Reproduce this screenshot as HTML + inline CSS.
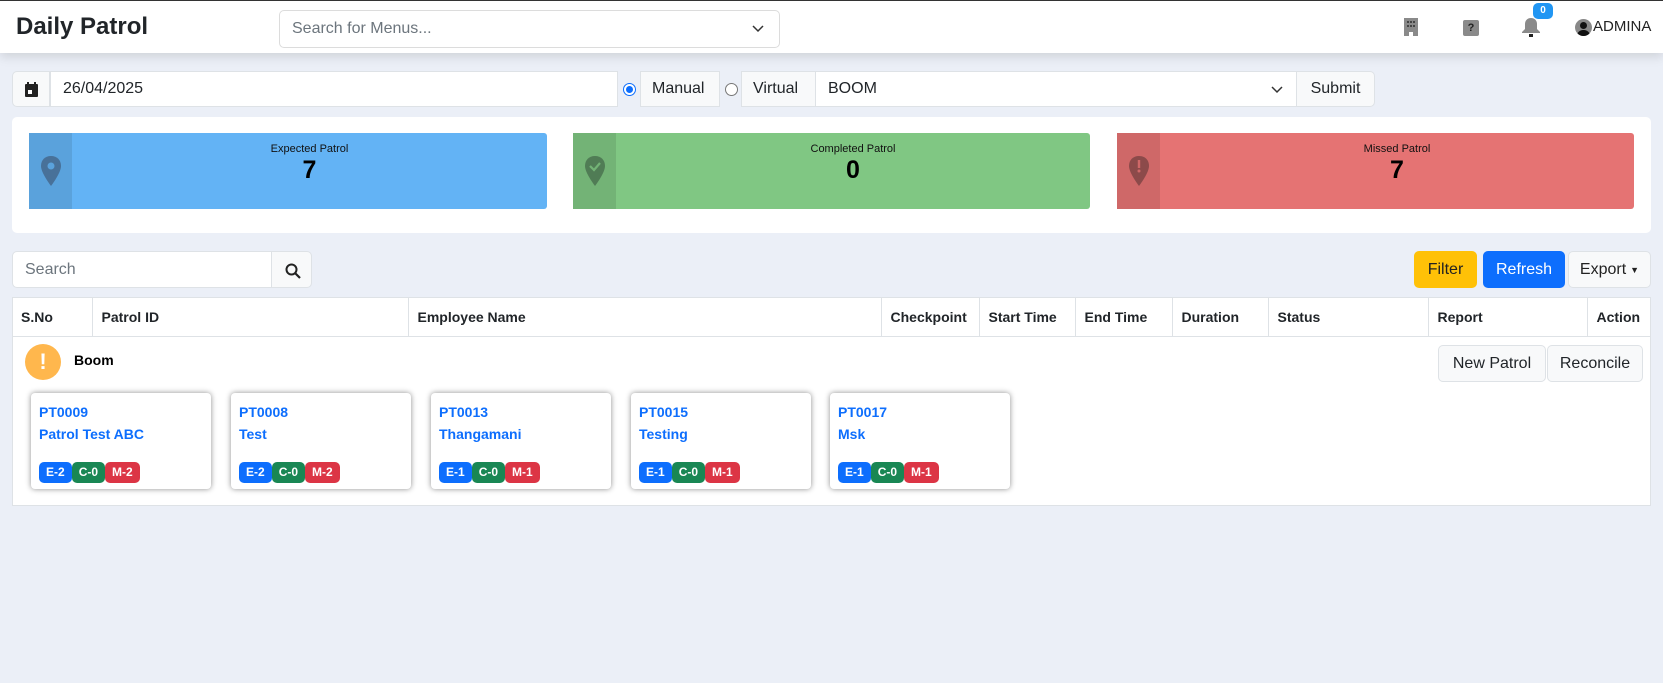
<!DOCTYPE html>
<html><head><meta charset="utf-8"><style>
*{box-sizing:border-box;margin:0;padding:0}
body{width:1663px;height:683px;background:#ebeff7;font-family:"Liberation Sans",sans-serif;position:relative;overflow:hidden;color:#212529}
.a{position:absolute}
.hdr{left:0;top:0;width:1663px;height:53px;background:#fff;border-top:1px solid #333;box-shadow:0 4px 10px rgba(0,0,0,.12)}
.box{border:1px solid #dee2e6;background:#fff}
.gb{background:#f8f9fa;border:1px solid #dee2e6}
.t16{font-size:16px}
.stat{top:133px;height:76px;border-radius:3px}
.strip{left:0;top:0;width:43px;height:100%;display:flex;align-items:center;justify-content:center}
.st{position:absolute;left:43px;right:0;text-align:center;top:10px;font-size:11px;color:#111}
.sn{position:absolute;left:43px;right:0;text-align:center;top:23px;font-size:25px;font-weight:bold;color:#000}
th{font-size:14px;font-weight:bold;text-align:left}
.card{top:393px;width:180px;height:96px;background:#fff;border-radius:4px;box-shadow:0 0 6px rgba(0,0,0,.45)}
.pid{position:absolute;left:8px;top:8px;font-size:14px;font-weight:bold;color:#0d6efd;line-height:22px}
.bd{position:absolute;left:8px;top:69px;display:flex}
.bd span{color:#fff;font-size:12px;font-weight:bold;padding:0 7px;height:21px;line-height:21px;border-radius:5px}
.e{background:#0d6efd}.c{background:#198754}.m{background:#dc3545}
.btn{border-radius:5px;font-size:16px;display:flex;align-items:center;justify-content:center}
</style></head><body>
<div class="a hdr">
<div class="a" style="left:16px;top:12px;font-size:24px;font-weight:bold;color:#212529">Daily Patrol</div>
<div class="a box" style="left:279px;top:9px;width:501px;height:38px;border-radius:5px;border-color:#dcdcdc">
<span class="a" style="left:12px;top:9px;font-size:16px;color:#6c757d">Search for Menus...</span>
<svg class="a" style="left:472px;top:14px" width="12" height="8" viewBox="0 0 12 8"><path d="M1 1l5 5 5-5" fill="none" stroke="#333" stroke-width="1.5"/></svg></div>
<svg class="a" style="left:1404px;top:17px" width="14" height="18" viewBox="0 0 14 18"><path d="M0 0h14v18h-5v-4h-4v4h-5z" fill="#8a8a8a"/><g fill="#444"><rect x="3" y="3" width="2" height="2"/><rect x="6" y="3" width="2" height="2"/><rect x="9" y="3" width="2" height="2"/><rect x="3" y="7" width="2" height="2"/><rect x="6" y="7" width="2" height="2"/><rect x="9" y="7" width="2" height="2"/></g></svg>
<div class="a" style="left:1463px;top:19px;width:16px;height:16px;background:#8a8a8a;border-radius:2px;color:#222;font-size:11px;font-weight:bold;text-align:center;line-height:16px">?</div>
<svg class="a" style="left:1522px;top:17px" width="18" height="20" viewBox="0 0 18 20"><path d="M9 0c-4 0-6 3-6 6v5l-3 3v1h18v-1l-3-3v-5c0-3-2-6-6-6z" fill="#8a8a8a"/><rect x="7" y="16" width="4" height="3" fill="#222"/></svg>
<div class="a" style="left:1533px;top:2px;width:20px;height:16px;background:#2196f3;border-radius:5px;color:#fff;font-size:10px;font-weight:bold;text-align:center;line-height:16px">0</div>
<div class="a" style="left:1575px;top:18px;width:17px;height:17px;border-radius:50%;background:#888;overflow:hidden"><div class="a" style="left:5px;top:3px;width:7px;height:7px;border-radius:50%;background:#111"></div><div class="a" style="left:2px;top:11px;width:13px;height:8px;border-radius:6px 6px 0 0;background:#111"></div></div>
<div class="a" style="left:1593px;top:17px;font-size:15px;color:#222">ADMINA</div>
</div>

<div class="a gb" style="left:12px;top:71px;width:38px;height:36px;border-radius:5px 0 0 5px"><svg class="a" style="left:12px;top:10px" width="13" height="15" viewBox="0 0 13 15"><rect x="0" y="2" width="13" height="13" rx="1" fill="#222"/><rect x="2" y="0" width="2" height="4" fill="#222"/><rect x="9" y="0" width="2" height="4" fill="#222"/><rect x="3" y="8" width="4" height="4" fill="#fff"/></svg></div>
<div class="a box" style="left:50px;top:71px;width:568px;height:36px"><span class="a t16" style="left:12px;top:8px">26/04/2025</span></div>
<div class="a" style="left:623px;top:83px;width:13px;height:13px;border-radius:50%;border:1px solid #0d6efd;background:#fff"><div class="a" style="left:2px;top:2px;width:7px;height:7px;border-radius:50%;background:#0d6efd"></div></div>
<div class="a gb" style="left:640px;top:71px;width:80px;height:36px"><span class="a t16" style="left:11px;top:8px">Manual</span></div>
<div class="a" style="left:725px;top:83px;width:13px;height:13px;border-radius:50%;border:1px solid #777;background:#fff"></div>
<div class="a gb" style="left:741px;top:71px;width:75px;height:36px"><span class="a t16" style="left:11px;top:8px">Virtual</span></div>
<div class="a box" style="left:815px;top:71px;width:482px;height:36px"><span class="a t16" style="left:12px;top:8px">BOOM</span><svg class="a" style="left:455px;top:14px" width="12" height="8" viewBox="0 0 12 8"><path d="M1 1l5 5 5-5" fill="none" stroke="#333" stroke-width="1.5"/></svg></div>
<div class="a gb btn" style="left:1296px;top:71px;width:79px;height:36px;border-radius:0 5px 5px 0">Submit</div>

<div class="a" style="left:12px;top:117px;width:1639px;height:116px;background:#fff;border-radius:5px"></div>
<div class="a stat" style="left:29px;width:518px;background:#63b3f5"><div class="a strip" style="background:#5aa2dc"><svg width="20" height="30" viewBox="0 0 20 30"><path d="M10 0C4 0 0 4 0 10c0 7 10 20 10 20s10-13 10-20C20 4 16 0 10 0z" fill="#487199"/><circle cx="10" cy="10" r="3.5" fill="#5aa2dc"/></svg></div><div class="st">Expected Patrol</div><div class="sn">7</div></div>
<div class="a stat" style="left:573px;width:517px;background:#80c783"><div class="a strip" style="background:#73b376"><svg width="20" height="30" viewBox="0 0 20 30"><path d="M10 0C4 0 0 4 0 10c0 7 10 20 10 20s10-13 10-20C20 4 16 0 10 0z" fill="#507c55"/><path d="M5 10l4 4 6-7" fill="none" stroke="#73b376" stroke-width="2.2"/></svg></div><div class="st">Completed Patrol</div><div class="sn">0</div></div>
<div class="a stat" style="left:1117px;width:517px;background:#e57373"><div class="a strip" style="background:#cf6868"><svg width="20" height="30" viewBox="0 0 20 30"><path d="M10 0C4 0 0 4 0 10c0 7 10 20 10 20s10-13 10-20C20 4 16 0 10 0z" fill="#8c4a4a"/><rect x="8.8" y="4" width="2.4" height="8" fill="#cf6868"/><circle cx="10" cy="15" r="1.5" fill="#cf6868"/></svg></div><div class="st">Missed Patrol</div><div class="sn">7</div></div>

<div class="a box" style="left:12px;top:251px;width:260px;height:37px;border-radius:5px 0 0 5px"><span class="a t16" style="left:12px;top:9px;color:#6c757d">Search</span></div>
<div class="a gb" style="left:271px;top:251px;width:41px;height:37px;border-radius:0 5px 5px 0"><svg class="a" style="left:13px;top:11px" width="16" height="16" viewBox="0 0 16 16"><circle cx="6.5" cy="6.5" r="5" fill="none" stroke="#222" stroke-width="2"/><path d="M10 10l5 5" stroke="#222" stroke-width="2.2"/></svg></div>
<div class="a btn" style="left:1414px;top:251px;width:63px;height:37px;background:#ffc107;color:#222">Filter</div>
<div class="a btn" style="left:1483px;top:251px;width:82px;height:37px;background:#0d6efd;color:#fff">Refresh</div>
<div class="a btn gb" style="left:1568px;top:251px;width:83px;height:37px;color:#222">Export <span style="font-size:9px;margin-left:4px">▼</span></div>

<div class="a box" style="left:12px;top:297px;width:1639px;height:209px"></div>
<table class="a" style="left:12px;top:297px;width:1639px;border-collapse:collapse"><tr style="height:39px">
<th style="width:80px;padding-left:9px;border-right:1px solid #dee2e6">S.No</th>
<th style="width:316px;padding-left:9px;border-right:1px solid #dee2e6">Patrol ID</th>
<th style="width:473px;padding-left:9px;border-right:1px solid #dee2e6">Employee Name</th>
<th style="width:98px;padding-left:9px;border-right:1px solid #dee2e6">Checkpoint</th>
<th style="width:96px;padding-left:9px;border-right:1px solid #dee2e6">Start Time</th>
<th style="width:97px;padding-left:9px;border-right:1px solid #dee2e6">End Time</th>
<th style="width:96px;padding-left:9px;border-right:1px solid #dee2e6">Duration</th>
<th style="width:160px;padding-left:9px;border-right:1px solid #dee2e6">Status</th>
<th style="width:159px;padding-left:9px;border-right:1px solid #dee2e6">Report</th>
<th style="padding-left:9px">Action</th></tr></table>
<div class="a" style="left:12px;top:336px;width:1639px;height:1px;background:#dee2e6"></div>
<div class="a" style="left:25px;top:344px;width:36px;height:36px;border-radius:50%;background:#ffb74d;color:#fff;font-size:22px;font-weight:bold;text-align:center;line-height:36px">!</div>
<div class="a" style="left:74px;top:352px;font-size:14px;font-weight:bold;color:#000">Boom</div>
<div class="a btn gb" style="left:1438px;top:345px;width:108px;height:37px">New Patrol</div>
<div class="a btn gb" style="left:1547px;top:345px;width:96px;height:37px">Reconcile</div>

<div class="a card" style="left:31px"><div class="pid">PT0009<br>Patrol Test ABC</div><div class="bd"><span class="e">E-2</span><span class="c">C-0</span><span class="m">M-2</span></div></div>
<div class="a card" style="left:231px"><div class="pid">PT0008<br>Test</div><div class="bd"><span class="e">E-2</span><span class="c">C-0</span><span class="m">M-2</span></div></div>
<div class="a card" style="left:431px"><div class="pid">PT0013<br>Thangamani</div><div class="bd"><span class="e">E-1</span><span class="c">C-0</span><span class="m">M-1</span></div></div>
<div class="a card" style="left:631px"><div class="pid">PT0015<br>Testing</div><div class="bd"><span class="e">E-1</span><span class="c">C-0</span><span class="m">M-1</span></div></div>
<div class="a card" style="left:830px"><div class="pid">PT0017<br>Msk</div><div class="bd"><span class="e">E-1</span><span class="c">C-0</span><span class="m">M-1</span></div></div>
</body></html>
